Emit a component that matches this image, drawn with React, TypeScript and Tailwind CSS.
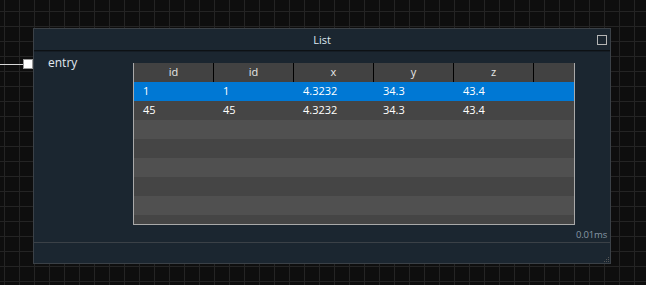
import React from "react";

const columns = ["id", "id", "x", "y", "z", ""];

const rows = [
  ["1", "1", "4.3232", "34.3", "43.4", ""],
  ["45", "45", "4.3232", "34.3", "43.4", ""],
];

function Table() {
  const filler = Array.from({ length: 6 });
  return (
    <div className="w-[442px] h-[162px] overflow-hidden border-l border-r border-b border-[#a9a9a9] bg-[#454545]">
      <div className="flex h-[19px] bg-[#424242]">
        {columns.map((c, i) => (
          <div
            key={i}
            className={
              "h-full flex items-center justify-center text-[11px] text-[#e8e8e8] " +
              (i === columns.length - 1 ? "flex-1" : "w-[80px] border-r border-black")
            }
          >
            {c}
          </div>
        ))}
      </div>
      {rows.map((r, ri) => (
        <div
          key={ri}
          className={"flex h-[19px] " + (ri === 0 ? "bg-[#0078d4]" : "bg-[#454545]")}
        >
          {r.map((v, ci) => (
            <div
              key={ci}
              className={
                "h-full flex items-center pl-[9px] text-[11px] text-white " +
                (ci === r.length - 1 ? "flex-1" : "w-[80px]")
              }
            >
              {v}
            </div>
          ))}
        </div>
      ))}
      {filler.map((_, i) => (
        <div key={i} className={"h-[19px] " + (i % 2 === 0 ? "bg-[#505050]" : "bg-[#454545]")} />
      ))}
    </div>
  );
}

export default function App() {
  return (
    <div
      className="relative w-[646px] h-[285px] overflow-hidden bg-[#0e0e0e] bg-[linear-gradient(to_right,#242424_1px,transparent_1px),linear-gradient(to_bottom,#242424_1px,transparent_1px)] bg-[size:15px_15px] bg-[position:4px_11px]"
      style={{ fontFamily: "'Open Sans', 'Noto Sans', sans-serif" }}
    >
      <div className="absolute left-[33px] top-[28px] w-[578px] h-[236px] border border-[#3b4147] bg-[#1b2630] flex flex-col">
        {/* title bar */}
        <div className="relative h-[21px] flex items-center justify-center pt-[1px] text-[11px] text-[#dde7f0]">
          List
          <div className="absolute right-[3px] top-[6px] w-[10px] h-[10px] border border-[#b5b5b5] bg-[#1b2630]" />
        </div>
        <div className="h-[1px] bg-[#0d1114]" />
        <div className="h-[1px] bg-[#151d25]" />

        {/* body */}
        <div className="relative flex-1 flex flex-col">
          <div className="flex pt-[11px]">
            <div className="w-[99px] pl-[14px] -mt-[9px] text-[12px] text-[#e1e8ef]">entry</div>
            <Table />
          </div>
          <div className="flex justify-end pr-[3px] pt-[3px] text-[9.5px] text-[#8797a4] tracking-[-0.2px]">
            0.01ms
          </div>
          {/* port */}
          <div className="absolute -left-[34px] top-[12px] w-[24px] h-[1px] bg-[#d8d8d8]" />
          <div className="absolute -left-[11px] top-[7px] w-[10px] h-[10px] bg-white border border-[#999]" />
        </div>

        {/* footer */}
        <div className="h-[1px] bg-[#3b4147]" />
        <div className="relative h-[20px]">
          <svg className="absolute right-0 bottom-0" width="7" height="7" viewBox="0 0 7 7">
            <rect x="5" y="1" width="1" height="1" fill="#555" />
            <rect x="3" y="3" width="1" height="1" fill="#555" />
            <rect x="5" y="3" width="1" height="1" fill="#555" />
            <rect x="1" y="5" width="1" height="1" fill="#555" />
            <rect x="3" y="5" width="1" height="1" fill="#555" />
            <rect x="5" y="5" width="1" height="1" fill="#555" />
          </svg>
        </div>
      </div>
    </div>
  );
}
